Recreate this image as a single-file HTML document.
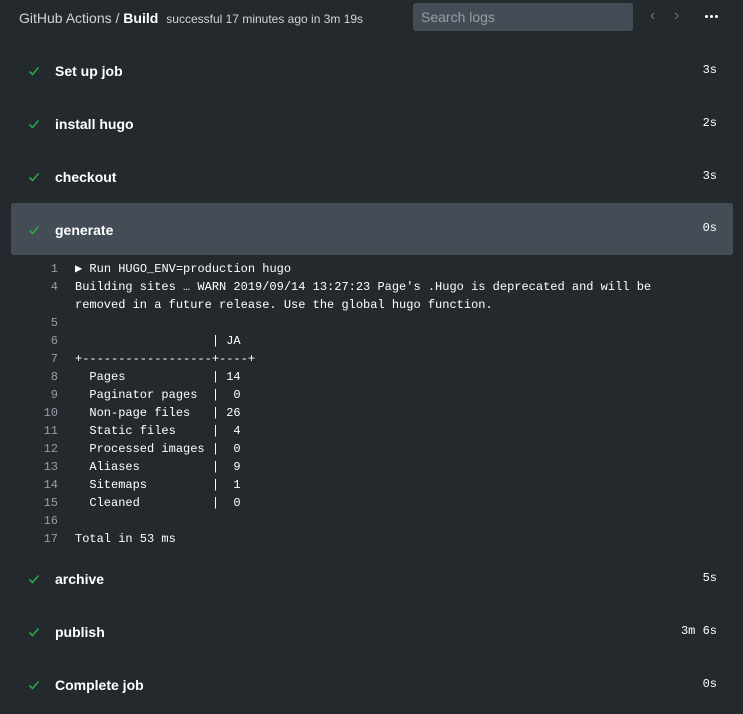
<!DOCTYPE html>
<html><head><style>
body{margin:0;background:#24292e;width:743px;height:714px;overflow:hidden;font-family:"Liberation Sans",sans-serif;color:#fff;position:relative}
.hdr{position:absolute;top:10px;left:19px;font-size:14px;color:#d1d5da}
.hdr b{color:#fff}
.hdr .s{font-size:12px;margin-left:8px}
.search{position:absolute;left:413px;top:3px;width:220px;height:28px;background:#444d56;border-radius:3px;color:#959da5;font-size:14px;line-height:28px;padding-left:8px;box-sizing:border-box}
.nav{position:absolute;top:7px;color:#6a737d;font-size:16px}
.row{position:absolute;left:11px;width:722px;height:52px;border-radius:3px}
.row.a{background:#444d56}
.row .c{position:absolute;left:17px;top:15px}
.row .t{position:absolute;left:44px;top:0;line-height:52px;font-size:14px;font-weight:bold}
.row .d{position:absolute;right:16px;top:0;line-height:50px;font-size:12px;font-family:"Liberation Mono",monospace}
.log{position:absolute;left:0;top:260px;font-family:"Liberation Mono",monospace;font-size:12px;line-height:18px;color:#fff}
.l{display:flex;white-space:pre}
.n{width:58px;text-align:right;color:#959da5;padding-right:17px}
.dots{position:absolute;left:705px;top:15px;display:flex;gap:2px}
.dots i{display:block;width:3px;height:3px;background:#fff;border-radius:50%}
</style></head><body>
<div class="hdr">GitHub Actions / <b>Build</b><span class="s">successful 17 minutes ago in 3m 19s</span></div>
<div class="search">Search logs</div>
<div class="nav" style="left:650px">&#8249;</div>
<div class="nav" style="left:674px">&#8250;</div>
<div class="dots"><i></i><i></i><i></i></div>
<svg width="0" height="0" style="position:absolute"><defs><symbol id="ck" viewBox="0 0 12 12"><path d="M1.5 6.5l3 3 6-7" fill="none" stroke="#28a745" stroke-width="1.6"/></symbol></defs></svg>
<div class="row" style="top:45px"><svg class="c" width="12" height="12" style="top:20px"><use href="#ck"/></svg><div class="t">Set up job</div><div class="d">3s</div></div>
<div class="row" style="top:98px"><svg class="c" width="12" height="12" style="top:20px"><use href="#ck"/></svg><div class="t">install hugo</div><div class="d">2s</div></div>
<div class="row" style="top:151px"><svg class="c" width="12" height="12" style="top:20px"><use href="#ck"/></svg><div class="t">checkout</div><div class="d">3s</div></div>
<div class="row a" style="top:203px"><svg class="c" width="12" height="12" style="top:21px"><use href="#ck"/></svg><div class="t" style="top:1px">generate</div><div class="d">0s</div></div>
<div class="log">
<div class="l"><span class="n">1</span>▶ Run HUGO_ENV=production hugo</div>
<div class="l"><span class="n">4</span>Building sites … WARN 2019/09/14 13:27:23 Page's .Hugo is deprecated and will be</div>
<div class="l"><span class="n"> </span>removed in a future release. Use the global hugo function.</div>
<div class="l"><span class="n">5</span></div>
<div class="l"><span class="n">6</span>                   | JA  </div>
<div class="l"><span class="n">7</span>+------------------+----+</div>
<div class="l"><span class="n">8</span>  Pages            | 14  </div>
<div class="l"><span class="n">9</span>  Paginator pages  |  0  </div>
<div class="l"><span class="n">10</span>  Non-page files   | 26  </div>
<div class="l"><span class="n">11</span>  Static files     |  4  </div>
<div class="l"><span class="n">12</span>  Processed images |  0  </div>
<div class="l"><span class="n">13</span>  Aliases          |  9  </div>
<div class="l"><span class="n">14</span>  Sitemaps         |  1  </div>
<div class="l"><span class="n">15</span>  Cleaned          |  0  </div>
<div class="l"><span class="n">16</span></div>
<div class="l"><span class="n">17</span>Total in 53 ms</div>
</div>
<div class="row" style="top:553px"><svg class="c" width="12" height="12" style="top:20px"><use href="#ck"/></svg><div class="t">archive</div><div class="d">5s</div></div>
<div class="row" style="top:606px"><svg class="c" width="12" height="12" style="top:20px"><use href="#ck"/></svg><div class="t">publish</div><div class="d">3m 6s</div></div>
<div class="row" style="top:659px"><svg class="c" width="12" height="12" style="top:20px"><use href="#ck"/></svg><div class="t">Complete job</div><div class="d">0s</div></div>
</body></html>
